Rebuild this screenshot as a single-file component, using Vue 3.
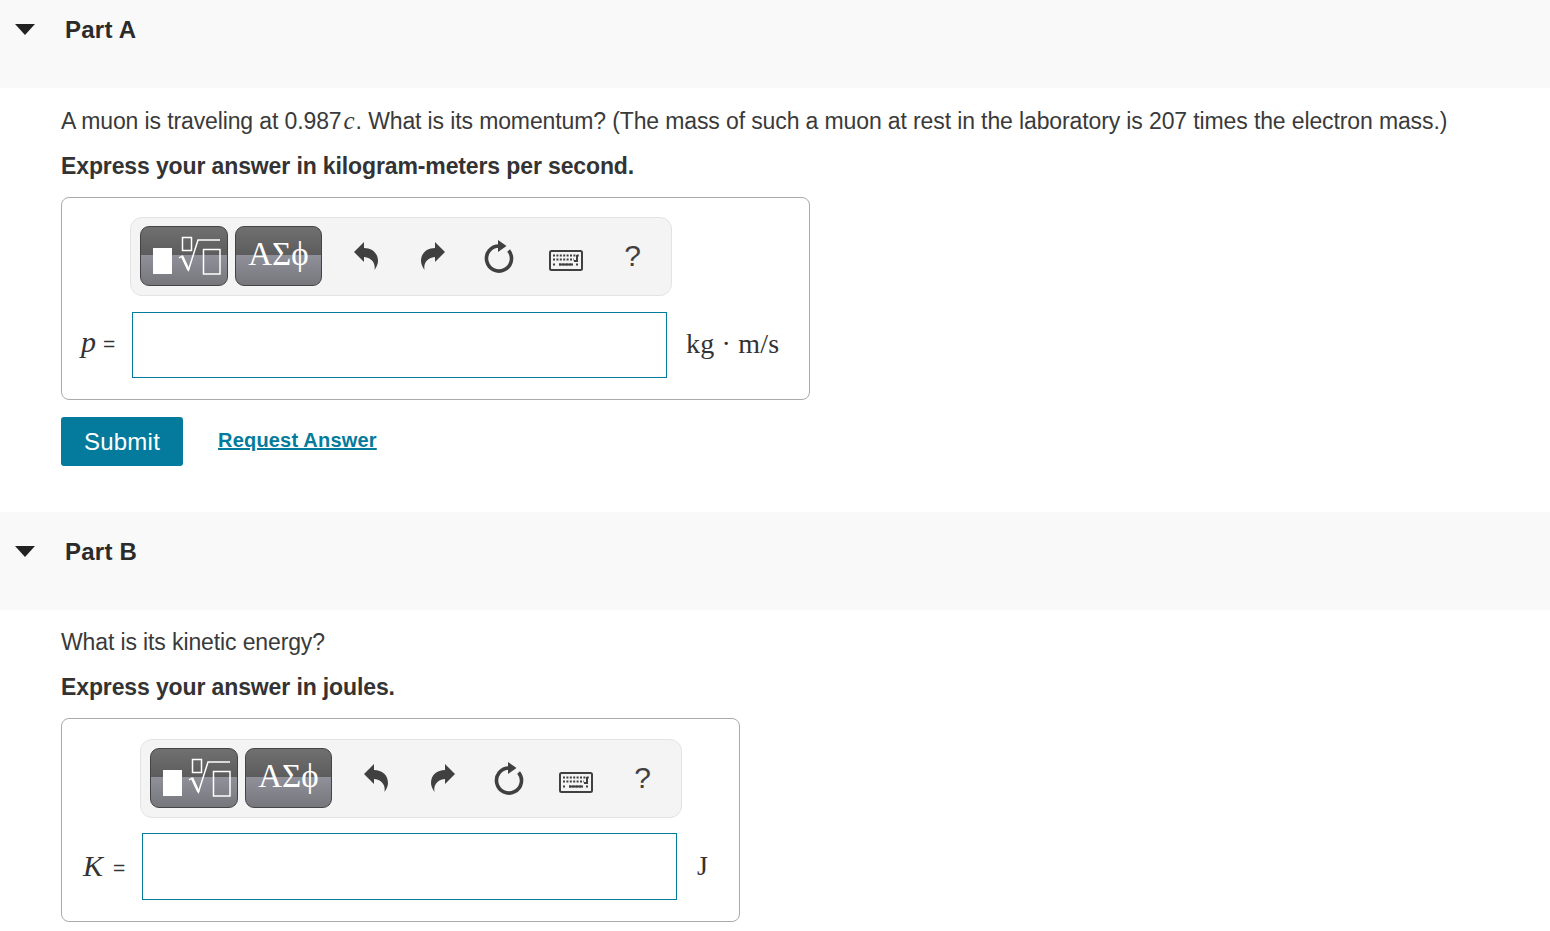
<script setup>
const parts = [
  {
    id: 'a',
    title: 'Part A',
    unit: 'kg · m/s',
    symbol: 'p',
    showSubmit: true,
    answerHint: 'Express your answer in kilogram-meters per second.'
  },
  {
    id: 'b',
    title: 'Part B',
    unit: 'J',
    symbol: 'K',
    showSubmit: false,
    answerHint: 'Express your answer in joules.'
  }
];
</script>

<template>
  <div class="page">
    <section v-for="part in parts" :key="part.id" class="part" :class="'part-' + part.id">
      <header class="part-head">
        <span class="caret"></span>
        <h2>{{ part.title }}</h2>
      </header>

      <div class="part-body">
        <p v-if="part.id === 'a'" class="question">
          A muon is traveling at 0.987<i class="c">c</i>. What is its momentum? (The mass of such a muon at rest in the laboratory is 207 times the electron mass.)
        </p>
        <p v-else class="question">What is its kinetic energy?</p>
        <p class="hint">{{ part.answerHint }}</p>

        <div class="answer-box">
          <div class="toolbar">
            <button class="math-btn">
              <svg width="86" height="58" viewBox="0 0 86 58" fill="none">
                <rect x="12" y="21" width="19" height="26" fill="#fff" />
                <rect x="41.5" y="10.5" width="9" height="13" stroke="#fff" stroke-width="1.5" />
                <path d="M38 31 L41 29 L47.5 43 L57 13 H79" stroke="#fff" stroke-width="1.5" />
                <path d="M41 29 L47.5 43" stroke="#fff" stroke-width="2.6" />
                <rect x="62.5" y="22.5" width="16.5" height="24.5" stroke="#fff" stroke-width="1.5" />
              </svg>
            </button>
            <button class="math-btn greek">ΑΣϕ</button>
            <div class="actions">
              <button class="action">
                <svg width="26" height="30" viewBox="0 0 26 30">
                  <path d="M1 11 L11 1 V7 C19 7 25 12 25 20 C25 23 23.5 26 21.5 29 C22.5 23 20 17 11 16 V21 Z" fill="#404040" />
                </svg>
              </button>
              <button class="action">
                <svg width="26" height="30" viewBox="0 0 26 30">
                  <path d="M25 11 L15 1 V7 C7 7 1 12 1 20 C1 23 2.5 26 4.5 29 C3.5 23 6 17 15 16 V21 Z" fill="#404040" />
                </svg>
              </button>
              <button class="action">
                <svg width="30" height="34" viewBox="0 0 30 34" fill="none">
                  <path d="M15 7 A12.5 12.5 0 1 0 24.6 11.5" stroke="#404040" stroke-width="3.6" />
                  <path d="M14 1 L22.5 7 L14 13 Z" fill="#404040" />
                </svg>
              </button>
              <button class="action kbd">
                <svg width="34" height="21" viewBox="0 0 34 21" fill="none">
                  <rect x="1" y="1" width="32" height="19" rx="1.5" stroke="#404040" stroke-width="2" />
                  <path d="M4 5.5 H30 M4 9.5 H25 M4 14.5 H7 M10 14.5 H24 M27 14.5 H30" stroke="#404040" stroke-width="2" stroke-dasharray="2 1.4" />
                  <path d="M10 14.5 H24" stroke="#404040" stroke-width="2" />
                  <path d="M28 5 V11 H25" stroke="#404040" stroke-width="2" />
                </svg>
              </button>
              <button class="action help">?</button>
            </div>
          </div>

          <div class="answer-row">
            <label class="symbol"><i>{{ part.symbol }}</i><span class="eq">=</span></label>
            <input class="answer-input" type="text" />
            <span class="unit">{{ part.unit }}</span>
          </div>
        </div>

        <div v-if="part.showSubmit" class="submit-row">
          <button class="submit">Submit</button>
          <a class="request" href="#">Request Answer</a>
        </div>
      </div>
    </section>
  </div>
</template>

<style scoped>
.page { font-family: "Liberation Sans", Arial, sans-serif; color: #333; }
.part-head { display: flex; align-items: flex-start; background: #f9f9f9; height: 88px; padding-top: 15px; box-sizing: border-box; }
.part-b .part-head { height: 98px; padding-top: 25px; }
.caret { width: 0; height: 0; margin: 9px 30px 0 15px; border-left: 10px solid transparent; border-right: 10px solid transparent; border-top: 11px solid #222; }
.part-head h2 { margin: 0; font-size: 24px; line-height: 29px; font-weight: bold; color: #2b2b2b; letter-spacing: 0.25px; }
.part-body { padding: 0 0 0 61px; }
.question { margin: 0; padding-top: 19px; font-size: 23px; line-height: 28px; color: #3a3a3a; letter-spacing: -0.12px; white-space: nowrap; }
.part-b .question { padding-top: 18px; }
.c { font-family: "Liberation Serif", serif; font-size: 25px; letter-spacing: 0; margin: 0 1px 0 2px; }
.hint { margin: 0; padding-top: 17px; font-size: 23px; line-height: 28px; font-weight: bold; letter-spacing: -0.12px; }
.answer-box { margin-top: 17px; width: fit-content; box-sizing: border-box; border: 1px solid #aaa; border-radius: 8px; padding: 19px 30px 21px 19px; }
.part-b .answer-box { padding: 20px 29px 21px 19px; }
.toolbar { display: flex; align-items: flex-start; box-sizing: border-box; width: 542px; height: 79px; margin-left: 49px; padding: 8px 0 8px 9px; background: #f4f4f4; border: 1px solid #e3e3e3; border-radius: 12px; }
.part-b .toolbar { margin-left: 59px; }
.math-btn { flex-shrink: 0; width: 88px; height: 60px; margin-right: 7px; padding: 0; display: flex; align-items: center; justify-content: center; border: 1px solid #444; border-radius: 9px; background: linear-gradient(#707070 0%, #5c5c5c 49%, #90909a 49%, #76767c 100%); color: #fff; }
.greek { font-family: "Liberation Serif", serif; font-size: 33px; width: 87px; margin-right: 0; padding-bottom: 4px; }
.actions { display: flex; margin-left: 10.6px; flex-shrink: 0; }
.action { width: 66.7px; height: 60px; padding: 0; border: 0; background: none; display: flex; align-items: center; justify-content: center; }
.kbd svg { margin-top: 9px; }
.help { font-family: "Liberation Sans", sans-serif; font-size: 30px; color: #404040; }
.answer-row { display: grid; grid-template-columns: 51px 535px auto; align-items: center; margin-top: 16px; }
.part-b .answer-row { grid-template-columns: 61px 535px auto; margin-top: 15px; }
.symbol { display: block; font-family: "Liberation Serif", serif; font-size: 30px; line-height: 30px; margin-top: -4px; white-space: nowrap; }
.part-b .symbol { padding-left: 2px; margin-top: 0; }
.eq { font-family: "Liberation Sans", sans-serif; font-size: 21px; margin-left: 7px; vertical-align: 1px; }
.part-b .eq { margin-left: 10px; }
.answer-input { box-sizing: border-box; width: 535px; height: 66px; border: 1px solid #047b9c; background: #fff; outline: none; padding: 0; }
.part-b .answer-input { height: 67px; }
.unit { font-family: "Liberation Serif", serif; font-size: 28px; letter-spacing: 0.2px; margin: -2px 0 0 19px; }
.part-b .unit { margin-left: 20px; min-width: 13px; }
.submit-row { display: flex; align-items: center; margin-top: 17px; }
.submit { width: 122px; height: 49px; padding: 0; border: 0; border-radius: 3px; background: #047b9c; color: #fff; font-family: inherit; font-size: 24px; letter-spacing: 0.25px; }
.request { margin: -3px 0 0 35px; color: #047b9c; font-size: 20px; font-weight: bold; letter-spacing: 0.2px; }
.part-b { margin-top: 46px; }
</style>

<style>
html, body { background: #fff; }
</style>
